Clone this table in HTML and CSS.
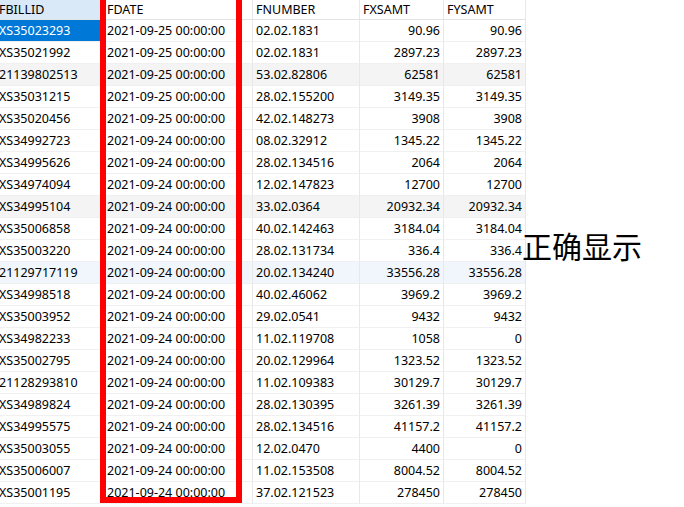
FILE: index.html
```html
<!DOCTYPE html>
<html>
<head>
<meta charset="utf-8">
<link rel="stylesheet" href="styles.css">
</head>
<body>
<div class="page">
  <div class="grid" id="grid">
    <div class="cell hd id sel-hd">FBILLID</div>
    <div class="cell hd date">FDATE</div>
    <div class="cell hd">FNUMBER</div>
    <div class="cell hd">FXSAMT</div>
    <div class="cell hd">FYSAMT</div>
  </div>
  <div class="redbox"></div>
  <div class="note">正确显示</div>
</div>
<script src="app.js"></script>
</body>
</html>
```
FILE: app.js
```js
const rows = [
["XS35023293","2021-09-25 00:00:00","02.02.1831","90.96","90.96"],
["XS35021992","2021-09-25 00:00:00","02.02.1831","2897.23","2897.23"],
["21139802513","2021-09-25 00:00:00","53.02.82806","62581","62581"],
["XS35031215","2021-09-25 00:00:00","28.02.155200","3149.35","3149.35"],
["XS35020456","2021-09-25 00:00:00","42.02.148273","3908","3908"],
["XS34992723","2021-09-24 00:00:00","08.02.32912","1345.22","1345.22"],
["XS34995626","2021-09-24 00:00:00","28.02.134516","2064","2064"],
["XS34974094","2021-09-24 00:00:00","12.02.147823","12700","12700"],
["XS34995104","2021-09-24 00:00:00","33.02.0364","20932.34","20932.34"],
["XS35006858","2021-09-24 00:00:00","40.02.142463","3184.04","3184.04"],
["XS35003220","2021-09-24 00:00:00","28.02.131734","336.4","336.4"],
["21129717119","2021-09-24 00:00:00","20.02.134240","33556.28","33556.28"],
["XS34998518","2021-09-24 00:00:00","40.02.46062","3969.2","3969.2"],
["XS35003952","2021-09-24 00:00:00","29.02.0541","9432","9432"],
["XS34982233","2021-09-24 00:00:00","11.02.119708","1058","0"],
["XS35002795","2021-09-24 00:00:00","20.02.129964","1323.52","1323.52"],
["21128293810","2021-09-24 00:00:00","11.02.109383","30129.7","30129.7"],
["XS34989824","2021-09-24 00:00:00","28.02.130395","3261.39","3261.39"],
["XS34995575","2021-09-24 00:00:00","28.02.134516","41157.2","41157.2"],
["XS35003055","2021-09-24 00:00:00","12.02.0470","4400","0"],
["XS35006007","2021-09-24 00:00:00","11.02.153508","8004.52","8004.52"],
["XS35001195","2021-09-24 00:00:00","37.02.121523","278450","278450"]
];
const shade = { 2: "gray", 8: "gray", 11: "blue" };
const grid = document.getElementById("grid");
rows.forEach((r, i) => {
  r.forEach((v, j) => {
    const d = document.createElement("div");
    let cls = "cell";
    if (shade[i]) cls += " " + shade[i];
    if (j === 0) cls += " id";
    if (j >= 3) cls += " num";
    if (i === 0 && j === 0) cls += " sel";
    d.className = cls;
    d.textContent = v;
    grid.appendChild(d);
  });
});
```
FILE: styles.css
```css
html, body {
  margin: 0;
  padding: 0;
  background: #ffffff;
}
.page {
  position: relative;
  width: 684px;
  height: 507px;
  overflow: hidden;
  font-family: "Noto Sans", "Open Sans", sans-serif;
  font-size: 12.5px;
  color: #000000;
}
.grid {
  display: grid;
  grid-template-columns: 104px 149px 107px 84px 82px;
  grid-auto-rows: 22px;
  grid-template-rows: 20px;
  width: 526px;
}
.cell {
  box-sizing: border-box;
  border-right: 1px solid #e8e8e8;
  border-bottom: 1px solid #f0f0f0;
  padding: 0 3px;
  display: flex;
  align-items: center;
  white-space: nowrap;
  overflow: hidden;
  background: #ffffff;
}
.cell.hd {
  border-bottom: 1px solid #e3e3e3;
}
.cell.sel-hd {
  background: #d9e9f7;
}
.cell.id {
  padding-left: 0;
  text-indent: -1px;
}
.cell.num {
  justify-content: flex-end;
}
.cell.gray {
  background: #f4f4f4;
}
.cell.blue {
  background: #f0f6fc;
}
.cell.sel {
  background: #0078d7;
  color: #ffffff;
}
.redbox {
  position: absolute;
  left: 100px;
  top: -10px;
  width: 142px;
  height: 513px;
  box-sizing: border-box;
  border: 6px solid #ff0000;
}
.note {
  position: absolute;
  left: 522px;
  top: 228px;
  font-family: "Noto Sans CJK SC", serif;
  font-size: 30px;
  line-height: 34px;
  color: #000000;
}
```
